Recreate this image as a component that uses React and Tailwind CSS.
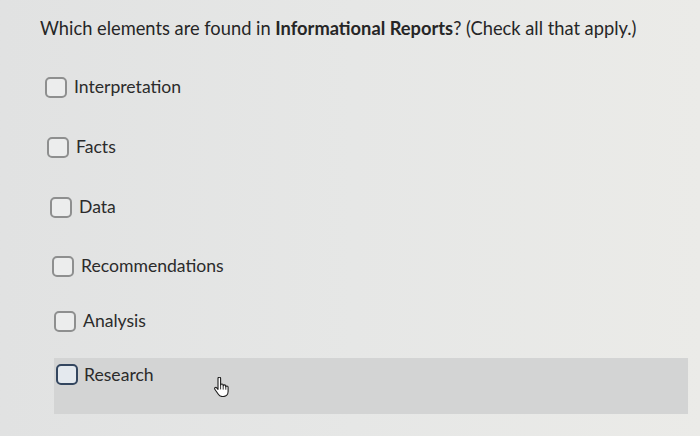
import React from "react";

const options = [
  { label: "Interpretation", pad: "pl-[45px]", h: "h-[60px]" },
  { label: "Facts", pad: "pl-[47px]", h: "h-[60px]" },
  { label: "Data", pad: "pl-[50px]", h: "h-[59px]" },
  { label: "Recommendations", pad: "pl-[52px]", h: "h-[55px]" },
  { label: "Analysis", pad: "pl-[54px]", h: "h-[48px]" },
];

function HandCursor() {
  return (
    <svg width="17" height="20" viewBox="0 0 17 20" className="absolute left-[159px] top-[19px]">
      <path
        d="M5 1.5c0-.8.6-1.3 1.3-1.3S7.6.7 7.6 1.5V8c.2-.7.8-1 1.4-1 .7 0 1.2.5 1.2 1.2v.6c.2-.6.8-.9 1.3-.9.7 0 1.2.5 1.2 1.2v.7c.2-.5.7-.8 1.2-.8.7 0 1.2.6 1.2 1.3v4.3c0 2.8-2 4.9-4.8 4.9H9.2c-1.6 0-2.8-.7-3.7-2L1.8 12.2c-.4-.6-.2-1.3.4-1.6.5-.3 1.1-.2 1.5.2L5 12.3V1.5z"
        fill="#ffffff"
        stroke="#1d1d1d"
        strokeWidth="1.1"
        strokeLinejoin="round"
      />
      <path d="M7.6 8v4M10.2 8.8v3.4M12.8 9.7v2.6" stroke="#1d1d1d" strokeWidth="0.9" strokeLinecap="round" />
    </svg>
  );
}

export default function App() {
  return (
    <div
      className="h-[436px] w-[700px] overflow-hidden bg-gradient-to-r from-[#e1e2e2] via-[#e6e7e6] to-[#ebebe8] text-[#2b2b2b]"
      style={{ fontFamily: "Lato, 'Open Sans', sans-serif" }}
    >
      <h1 className="pl-[40px] pt-[15px] text-[18.3px] leading-[26px] text-[#262626]">
        Which elements are found in <span className="font-bold">Informational Reports</span>? (Check all that apply.)
      </h1>
      <div className="mt-[35px] flex flex-col">
        {options.map((o) => (
          <div key={o.label} className={`flex ${o.h} items-start ${o.pad}`}>
            <div className="flex items-center gap-[7px]">
              <span className="h-[21px] w-[22px] rounded-[5px] border-2 border-[#8e8f8f] bg-[#eceded]" />
              <span className="text-[17.6px] leading-[22px]">{o.label}</span>
            </div>
          </div>
        ))}
        <div className="ml-[54px] w-[634px]">
          <div className="relative flex h-[56px] items-start bg-[#d3d4d4] pl-[2px] pt-[6px]">
            <span className="h-[21px] w-[22px] rounded-[5px] border-2 border-[#33465f] bg-[#e4e9ee]" />
            <span className="ml-[6px] text-[17.6px] leading-[22px]">Research</span>
            <HandCursor />
          </div>
        </div>
      </div>
    </div>
  );
}
